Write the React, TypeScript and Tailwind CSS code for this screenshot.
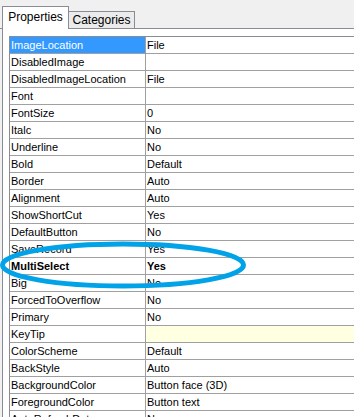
import React from 'react';

type Row = { name: string; value: string; selected?: boolean; bold?: boolean; tip?: boolean };

const rows: Row[] = [
  { name: 'ImageLocation', value: 'File', selected: true },
  { name: 'DisabledImage', value: '' },
  { name: 'DisabledImageLocation', value: 'File' },
  { name: 'Font', value: '' },
  { name: 'FontSize', value: '0' },
  { name: 'Italc', value: 'No' },
  { name: 'Underline', value: 'No' },
  { name: 'Bold', value: 'Default' },
  { name: 'Border', value: 'Auto' },
  { name: 'Alignment', value: 'Auto' },
  { name: 'ShowShortCut', value: 'Yes' },
  { name: 'DefaultButton', value: 'No' },
  { name: 'SaveRecord', value: 'Yes' },
  { name: 'MultiSelect', value: 'Yes', bold: true },
  { name: 'Big', value: 'No' },
  { name: 'ForcedToOverflow', value: 'No' },
  { name: 'Primary', value: 'No' },
  { name: 'KeyTip', value: '', tip: true },
  { name: 'ColorScheme', value: 'Default' },
  { name: 'BackStyle', value: 'Auto' },
  { name: 'BackgroundColor', value: 'Button face (3D)' },
  { name: 'ForegroundColor', value: 'Button text' },
  { name: 'AutoRefreshData', value: 'No' },
];

const PropRow: React.FC<{ row: Row }> = ({ row }) => (
  <div className={`flex h-[17px] border-b border-[#a0a0a0] ${row.bold ? 'font-bold' : ''}`}>
    <div
      className={`w-[136px] shrink-0 border-r border-[#a0a0a0] pl-px leading-[16px] whitespace-nowrap overflow-hidden ${
        row.selected ? 'bg-[#3399ff] text-white' : 'text-black'
      }`}
    >
      {row.name}
    </div>
    <div className={`flex-1 pl-px leading-[16px] whitespace-nowrap text-black ${row.tip ? 'bg-[#ffffe1]' : 'bg-white'}`}>
      {row.value}
    </div>
  </div>
);

export default function App() {
  return (
    <div className="relative w-[354px] h-[417px] overflow-hidden bg-[#f0f0f0] font-['Liberation_Sans',Arial,sans-serif]">
      {/* Tabs */}
      <div className="flex items-end h-[29px] pl-[2px] border-b border-[#898c95] text-[12px] text-black">
        <div className="relative z-10 -mb-px h-[23px] w-[67px] bg-white border border-b-0 border-[#898c95] flex items-center justify-center pb-[2px]">
          Properties
        </div>
        <div className="h-[17px] w-[66px] bg-[#ebebeb] border-t border-r border-[#898c95] flex items-center justify-center">
          Categories
        </div>
      </div>

      {/* Property page */}
      <div className="ml-[2px] h-[388px] bg-white border-l border-[#898c95] pl-[6px] pt-[7px]">
        <div className="border-l border-t border-[#898c95] text-[11px]">
          {rows.map((r) => (
            <PropRow key={r.name} row={r} />
          ))}
        </div>
      </div>

      {/* Highlight annotation */}
      <svg className="absolute left-0 top-0 pointer-events-none" width="354" height="417">
        <ellipse cx="123" cy="265" rx="120.5" ry="21" fill="none" stroke="#00a2e8" strokeWidth="5" />
      </svg>
    </div>
  );
}
